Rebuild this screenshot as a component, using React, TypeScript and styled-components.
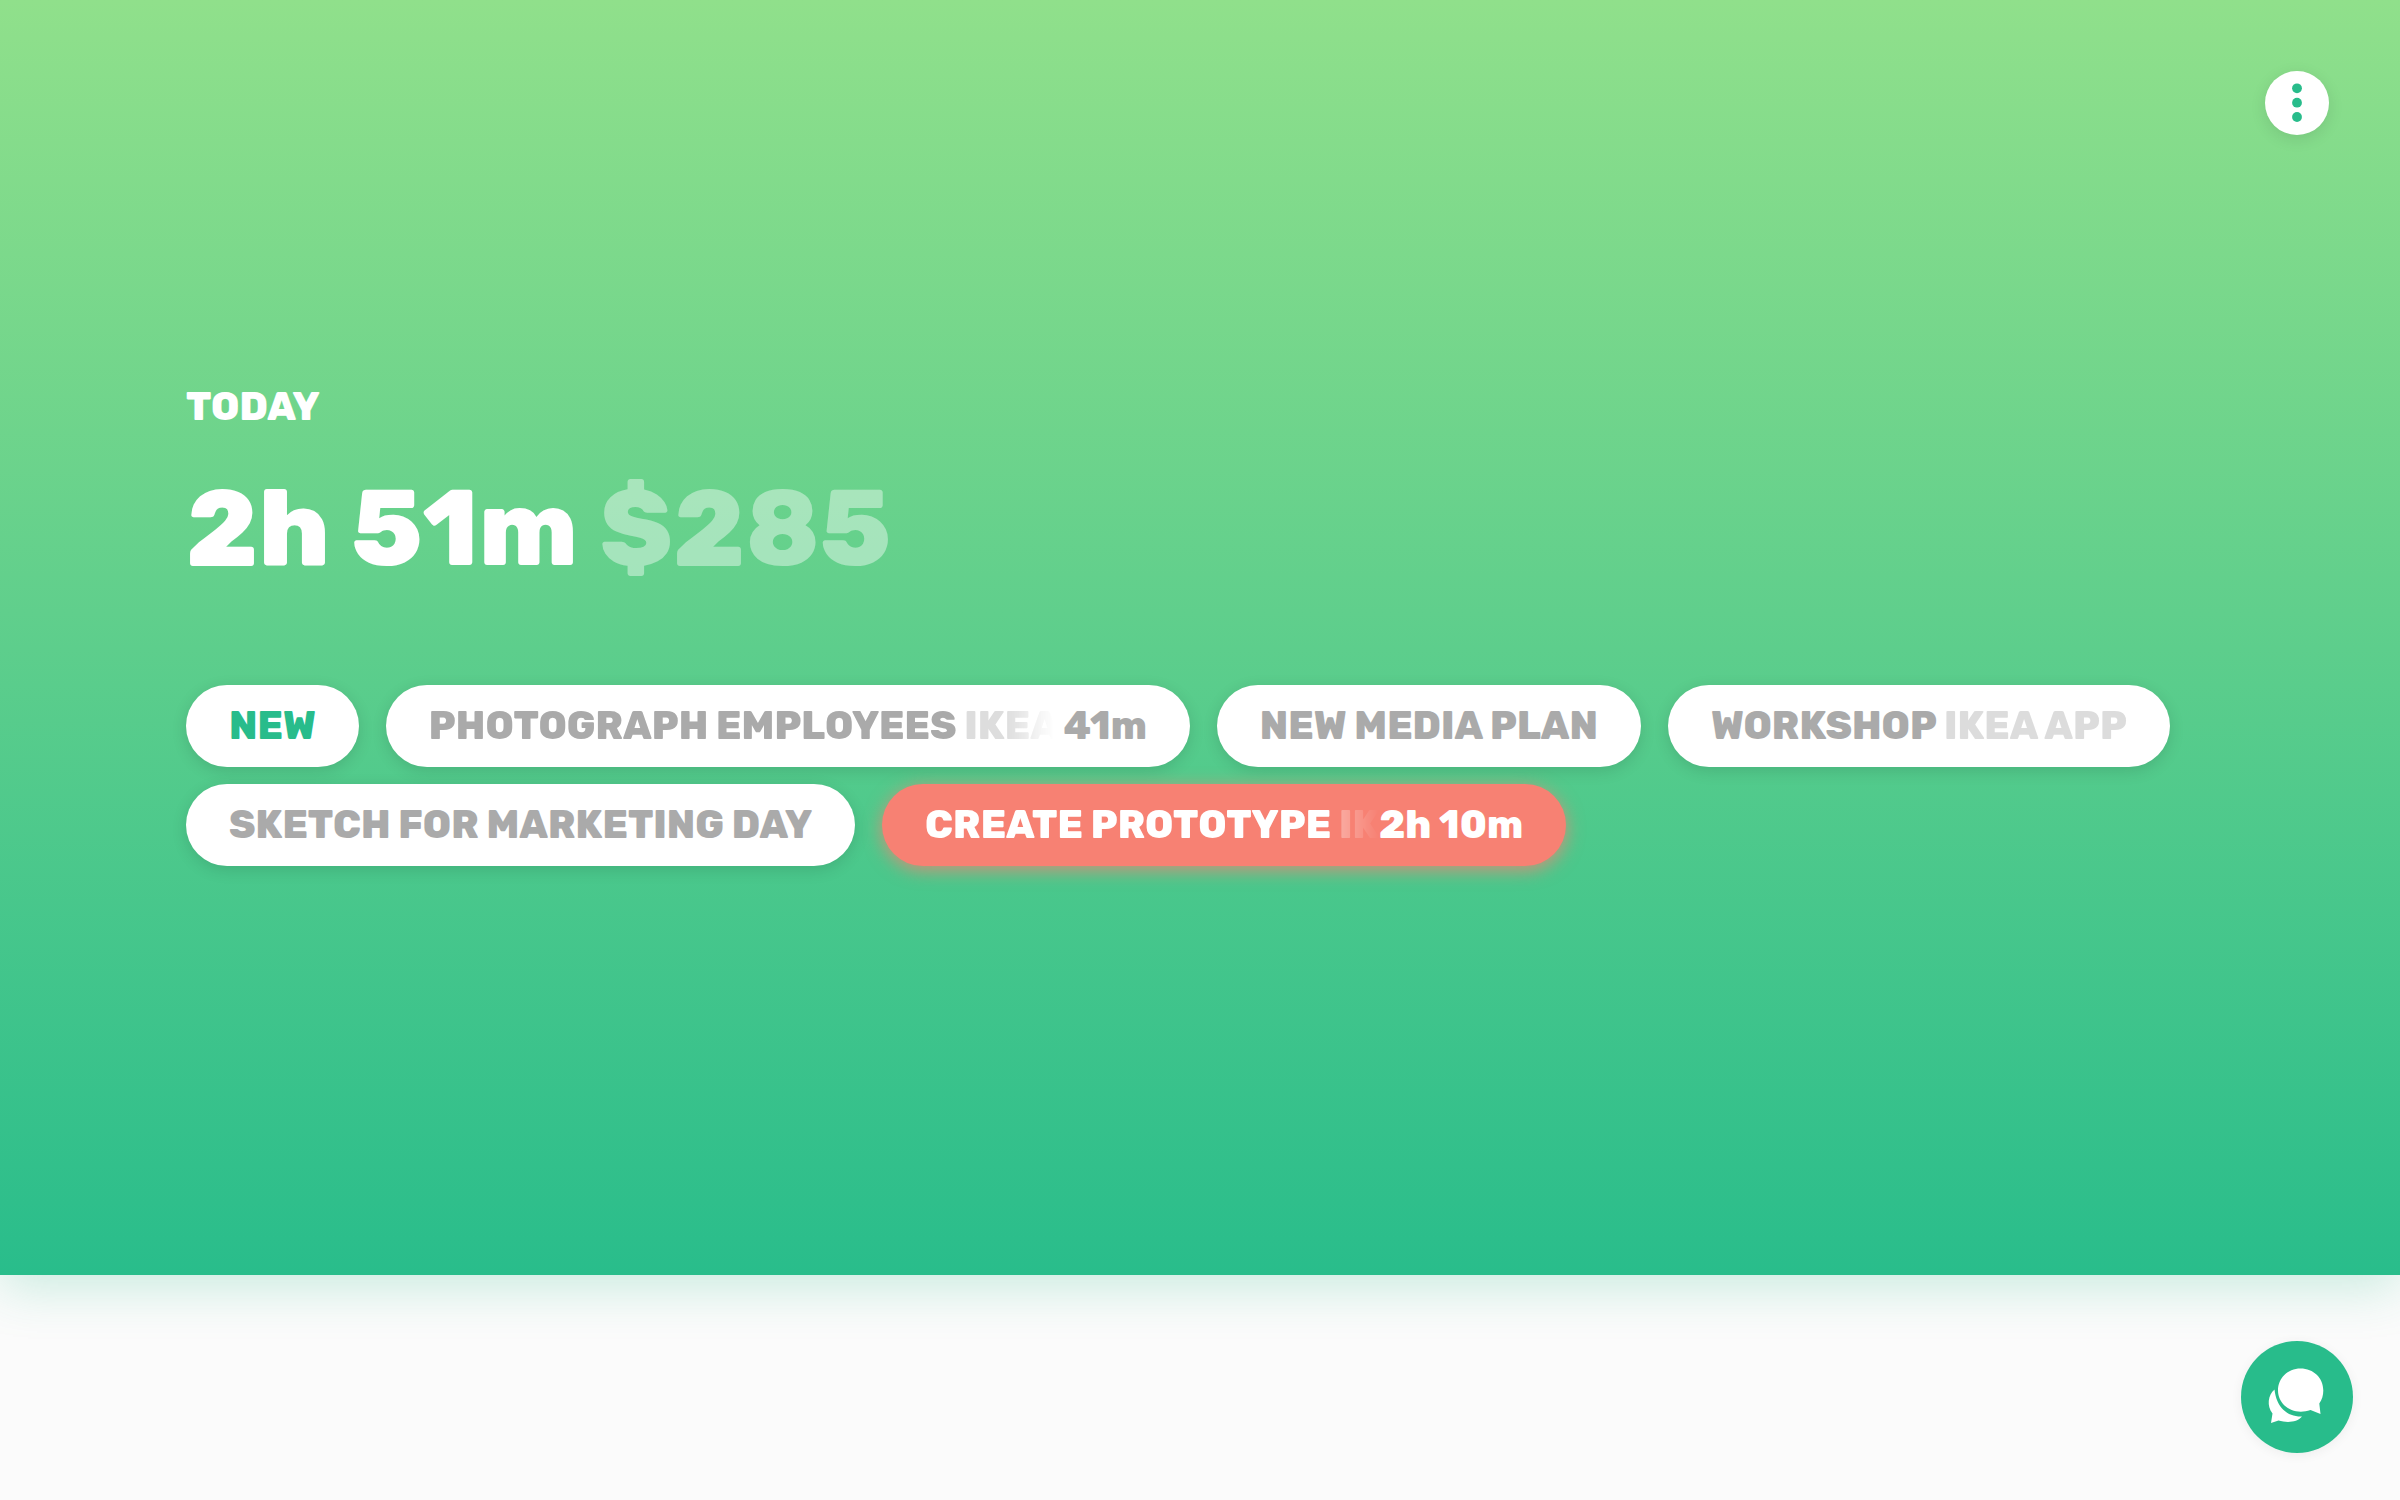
import React from "react";
import styled, { createGlobalStyle, css } from "styled-components";

const GlobalStyle = createGlobalStyle`
  * { box-sizing: border-box; }
  body {
    margin: 0;
    background: #fbfbfb;
    font-family: Rubik, Inter, "Open Sans", sans-serif;
  }
`;

const Page = styled.div`
  min-height: 100vh;
  overflow: hidden;
`;

const Hero = styled.main`
  display: flex;
  flex-direction: column;
  justify-content: center;
  height: 85vh;
  padding: 0 186px 26px;
  background: linear-gradient(180deg, #90e08b 0%, #60cf8c 48%, #29bd8b 100%);
  box-shadow: 0 12px 48px rgba(40, 190, 140, 0.24);
`;

const Period = styled.h2`
  margin: 0;
  color: #fff;
  font-size: 39px;
  line-height: 48px;
  font-weight: 800;
`;

const Total = styled.h1`
  margin: 30px 0 0;
  color: #fff;
  font-size: 107px;
  line-height: 136px;
  font-weight: 800;
`;

const Amount = styled.span`
  color: rgba(255, 255, 255, 0.42);
`;

const TaskList = styled.ul`
  display: flex;
  flex-wrap: wrap;
  gap: 17px 27px;
  margin: 88px 0 0;
  padding: 0;
  list-style: none;
`;

const TaskItem = styled.li<{ $width?: number }>`
  flex: 0 1 ${(p) => (p.$width ? `${p.$width}px` : "auto")};
  min-width: 0;
`;

type Tone = "new" | "idle" | "active";

const tones = {
  new: css`
    color: #28bc8b;
    background: #fff;
    box-shadow: 0 4px 16px rgba(0, 0, 0, 0.12);
  `,
  idle: css`
    color: #aaa;
    background: #fff;
    box-shadow: 0 4px 16px rgba(0, 0, 0, 0.12);
  `,
  active: css`
    color: #fff;
    background: #f78173;
    box-shadow: 0 4px 18px rgba(247, 129, 115, 0.8);
  `,
};

const Pill = styled.button<{ $tone: Tone }>`
  display: flex;
  align-items: center;
  justify-content: center;
  width: 100%;
  height: 82px;
  padding: 0 43px;
  border: 0;
  border-radius: 41px;
  font-family: inherit;
  font-size: 39px;
  line-height: 48px;
  font-weight: 800;
  white-space: nowrap;
  cursor: pointer;
  ${(p) => tones[p.$tone]}
`;

const Label = styled.span<{ $fade: boolean }>`
  ${(p) =>
    p.$fade &&
    css`
      flex: 1;
      min-width: 0;
      overflow: hidden;
      text-align: left;
      mask-image: linear-gradient(90deg, #000 calc(100% - 48px), transparent);
    `}
`;

const Client = styled.span`
  opacity: 0.4;
`;

const Time = styled.span<{ $gap: boolean }>`
  flex: none;
  padding-left: ${(p) => (p.$gap ? 10 : 0)}px;
`;

const RoundButton = styled.button<{ $size: number; $filled?: boolean }>`
  position: fixed;
  display: grid;
  place-items: center;
  width: ${(p) => p.$size}px;
  height: ${(p) => p.$size}px;
  padding: 0;
  border: 0;
  border-radius: 50%;
  color: ${(p) => (p.$filled ? "#fff" : "#28bc8b")};
  background: ${(p) => (p.$filled ? "#28bc8b" : "#fff")};
  cursor: pointer;
`;

const MenuButton = styled(RoundButton)`
  top: 71px;
  right: 71px;
  box-shadow: 0 4px 16px rgba(0, 0, 0, 0.1);
`;

const ChatButton = styled(RoundButton)`
  right: 47px;
  bottom: 47px;
  box-shadow: 0 2px 12px rgba(0, 0, 0, 0.06);
`;

type Task = {
  name: string;
  client?: string;
  time?: string;
  tone: Tone;
  width?: number;
};

const tasks: Task[] = [
  { name: "NEW", tone: "new" },
  { name: "PHOTOGRAPH EMPLOYEES", client: "IKEA APP", time: "41m", tone: "idle", width: 804 },
  { name: "NEW MEDIA PLAN", tone: "idle" },
  { name: "WORKSHOP", client: "IKEA APP", tone: "idle" },
  { name: "SKETCH FOR MARKETING DAY", tone: "idle" },
  { name: "CREATE PROTOTYPE", client: "IKEA APP", time: "2h 10m", tone: "active", width: 684 },
];

export default function App() {
  return (
    <Page>
      <GlobalStyle />
      <Hero>
        <Period>TODAY</Period>
        <Total>
          2h 51m <Amount>$285</Amount>
        </Total>
        <TaskList>
          {tasks.map((task) => (
            <TaskItem key={task.name} $width={task.width}>
              <Pill type="button" $tone={task.tone}>
                <Label $fade={Boolean(task.time)}>
                  {task.name}
                  {task.client && <Client> {task.client}</Client>}
                </Label>
                {task.time && <Time $gap={task.tone === "idle"}>{task.time}</Time>}
              </Pill>
            </TaskItem>
          ))}
        </TaskList>
      </Hero>
      <MenuButton type="button" $size={64} aria-label="Menu">
        <svg width="64" height="64" viewBox="0 0 64 64" fill="currentColor">
          <circle cx="32" cy="17.3" r="4.9" />
          <circle cx="32" cy="31.7" r="4.9" />
          <circle cx="32" cy="46" r="4.9" />
        </svg>
      </MenuButton>
      <ChatButton type="button" $size={112} $filled aria-label="Chat">
        <svg width="112" height="112" viewBox="0 0 112 112" fill="currentColor">
          <path d="M33.500 48.500C27 54 25.500 65 31.500 72.500L30 82L37.500 79.500C46 82 56 81.500 61 75.500C47 76 35.500 67 33.500 48.500Z" />
          <path d="M59.500 27.500C46.500 27.500 37 37.500 37 49.500C37 64 52 75 69.500 69L79.500 73L78.300 62.500C81 58.500 82.300 54.500 82.300 49.500C82.300 37 72.500 27.500 59.500 27.500Z" />
        </svg>
      </ChatButton>
    </Page>
  );
}
